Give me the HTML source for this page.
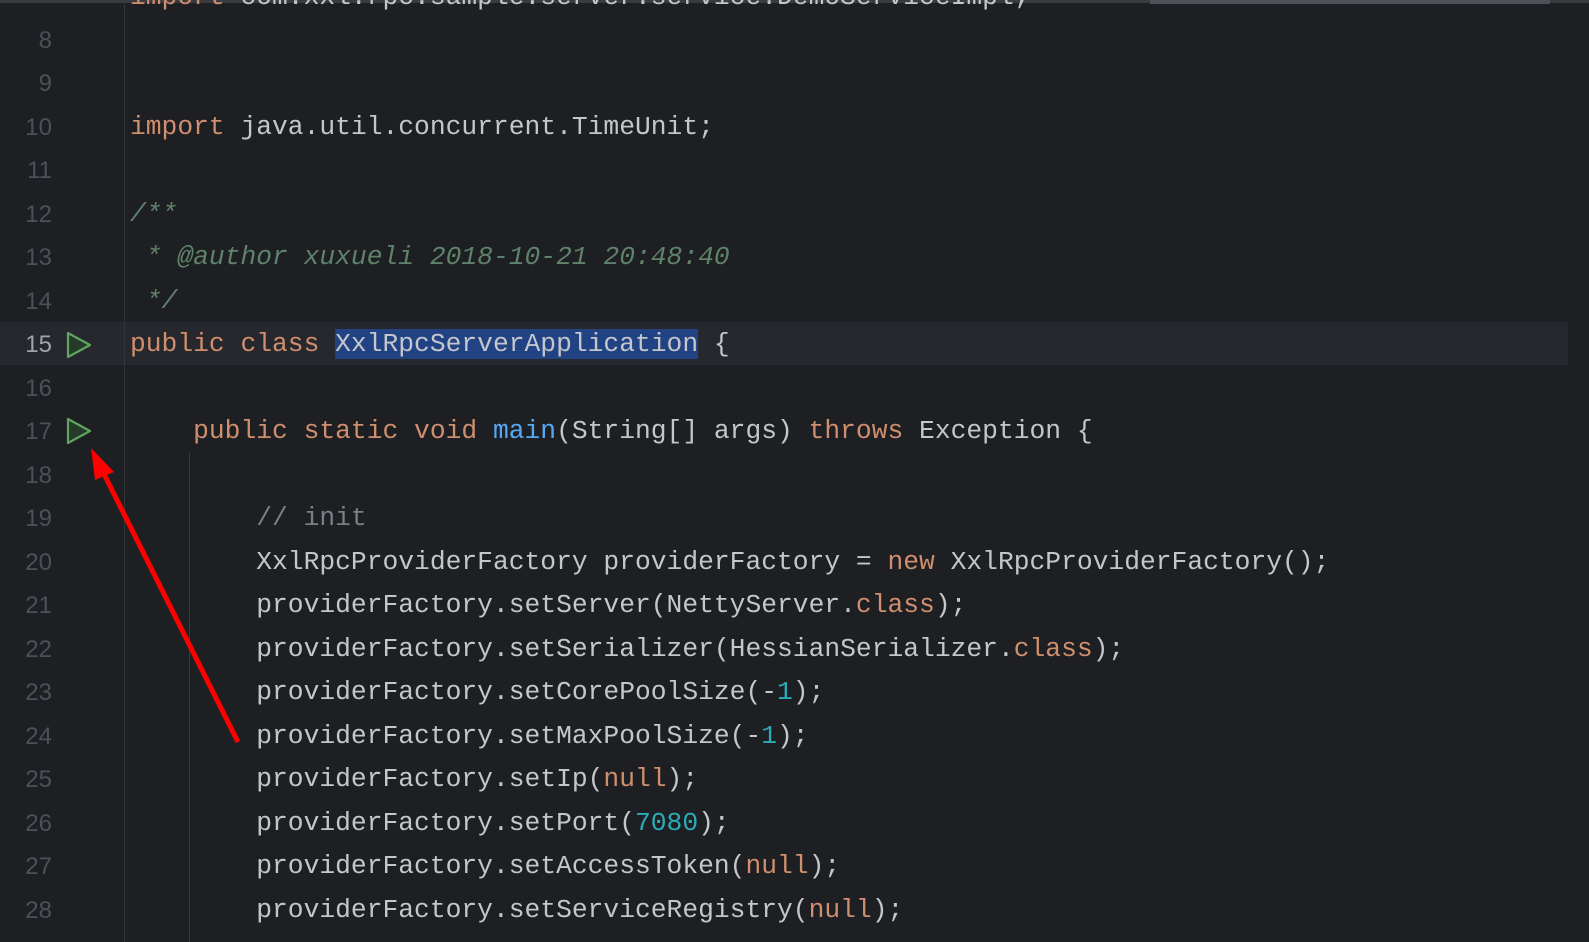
<!DOCTYPE html>
<html><head><style>
body{margin:0;width:1589px;height:942px;background:#1e1f22;overflow:hidden;position:relative;font-family:"Liberation Mono",monospace;font-size:26.3px;}
.l{position:absolute;left:130px;height:43px;line-height:43px;white-space:pre;color:#c4c6cc;}
.n{position:absolute;left:0;width:52px;text-align:right;height:43px;line-height:43px;color:#4b5059;font-family:"Liberation Sans",sans-serif;font-size:24px;}
.k{color:#cf8e6d}.c{color:#7a7e85}.d{color:#5f826b;font-style:italic}.m{color:#56a8f5}.num{color:#2aacb8}
</style></head><body>
<div style="position:absolute;left:0;top:0;width:1589px;height:3px;background:#393b40"></div>
<div style="position:absolute;left:1150px;top:0;width:400px;height:4px;background:#4e5157"></div>
<div style="position:absolute;left:0;top:322px;width:1568px;height:43px;background:#26282e"></div>
<div style="position:absolute;left:124px;top:0;width:1px;height:942px;background:#313438"></div>
<div style="position:absolute;left:189px;top:452px;width:1px;height:490px;background:#393b40"></div>
<div class="l" style="top:-24px"><span class="k">import</span> com.xxl.rpc.sample.server.service.DemoServiceImpl;</div>
<div class="n" style="top:19px">8</div>
<div class="n" style="top:62px">9</div>
<div class="n" style="top:106px">10</div>
<div class="l" style="top:106px"><span class="k">import</span> java.util.concurrent.TimeUnit;</div>
<div class="n" style="top:149px">11</div>
<div class="n" style="top:193px">12</div>
<div class="l d" style="top:193px">/**</div>
<div class="n" style="top:236px">13</div>
<div class="l d" style="top:236px"> * @author xuxueli 2018-10-21 20:48:40</div>
<div class="n" style="top:280px">14</div>
<div class="l d" style="top:280px"> */</div>
<div class="n" style="top:323px;color:#a1a3ab">15</div>
<div class="l" style="top:323px"><span class="k">public class</span> <span style="background:#214283">XxlRpcServerApplication</span> {</div>
<div class="n" style="top:367px">16</div>
<div class="n" style="top:410px">17</div>
<div class="l" style="top:410px">    <span class="k">public static void</span> <span class="m">main</span>(String[] args) <span class="k">throws</span> Exception {</div>
<div class="n" style="top:454px">18</div>
<div class="n" style="top:497px">19</div>
<div class="l c" style="top:497px">        // init</div>
<div class="n" style="top:541px">20</div>
<div class="l" style="top:541px">        XxlRpcProviderFactory providerFactory = <span class="k">new</span> XxlRpcProviderFactory();</div>
<div class="n" style="top:584px">21</div>
<div class="l" style="top:584px">        providerFactory.setServer(NettyServer.<span class="k">class</span>);</div>
<div class="n" style="top:628px">22</div>
<div class="l" style="top:628px">        providerFactory.setSerializer(HessianSerializer.<span class="k">class</span>);</div>
<div class="n" style="top:671px">23</div>
<div class="l" style="top:671px">        providerFactory.setCorePoolSize(-<span class="num">1</span>);</div>
<div class="n" style="top:715px">24</div>
<div class="l" style="top:715px">        providerFactory.setMaxPoolSize(-<span class="num">1</span>);</div>
<div class="n" style="top:758px">25</div>
<div class="l" style="top:758px">        providerFactory.setIp(<span class="k">null</span>);</div>
<div class="n" style="top:802px">26</div>
<div class="l" style="top:802px">        providerFactory.setPort(<span class="num">7080</span>);</div>
<div class="n" style="top:845px">27</div>
<div class="l" style="top:845px">        providerFactory.setAccessToken(<span class="k">null</span>);</div>
<div class="n" style="top:889px">28</div>
<div class="l" style="top:889px">        providerFactory.setServiceRegistry(<span class="k">null</span>);</div>
<svg style="position:absolute;left:0;top:0" width="1589" height="942">
<path d="M68 333 L90 345 L68 357 Z" fill="#253a27" stroke="#5fa463" stroke-width="2.2" stroke-linejoin="round"/>
<path d="M68 419 L90 431 L68 443 Z" fill="#253a27" stroke="#5fa463" stroke-width="2.2" stroke-linejoin="round"/>
<line x1="238" y1="742" x2="103" y2="472" stroke="#ff0000" stroke-width="5"/>
<path d="M91 448 L114 472 L95 480 Z" fill="#ff0000"/>
</svg>
</body></html>
